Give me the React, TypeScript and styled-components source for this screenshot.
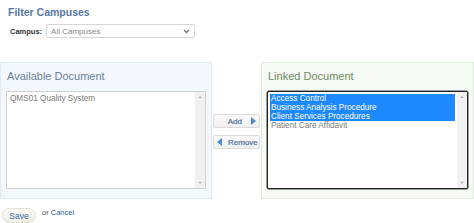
import styled, { createGlobalStyle } from "styled-components";

const GlobalStyle = createGlobalStyle`
  html, body { margin: 0; padding: 0; background: #fff; }
  body { font-family: "Liberation Sans", Arial, sans-serif; }
`;

const available = ["QMS01 Quality System"];
const linked = [
  { name: "Access Control", selected: true },
  { name: "Business Analysis Procedure", selected: true },
  { name: "Client Services Procedures", selected: true },
  { name: "Patient Care Affidavit", selected: false },
];

export default function App() {
  return (
    <Page>
      <GlobalStyle />
      <Filter>
        <FilterTitle>Filter Campuses</FilterTitle>
        <CampusRow>
          <CampusLabel>Campus:</CampusLabel>
          <Select>
            <span>All Campuses</span>
            <svg width="7" height="5" viewBox="0 0 7 5">
              <path d="M1 1 L3.5 3.5 L6 1" stroke="#777" strokeWidth="1.3" fill="none" />
            </svg>
          </Select>
        </CampusRow>
      </Filter>

      <Transfer>
        <Panel $tone="blue">
          <PanelTitle $tone="blue">Available Document</PanelTitle>
          <ListBox $focused={false}>
            <Items>
              {available.map(a => (
                <Item key={a} $selected={false}>{a}</Item>
              ))}
            </Items>
            <Scrollbar>
              <Arrow>▲</Arrow>
              <Arrow>▼</Arrow>
            </Scrollbar>
          </ListBox>
        </Panel>

        <Controls>
          <MoveButton $dir="right">
            <span>Add</span>
            <Tri $dir="right" />
          </MoveButton>
          <MoveButton $dir="left">
            <Tri $dir="left" />
            <span>Remove</span>
          </MoveButton>
        </Controls>

        <Panel $tone="green">
          <PanelTitle $tone="green">Linked Document</PanelTitle>
          <ListBox $focused>
            <Items>
              {linked.map(l => (
                <Item key={l.name} $selected={l.selected}>{l.name}</Item>
              ))}
            </Items>
            <Scrollbar>
              <Arrow>▲</Arrow>
              <Arrow>▼</Arrow>
            </Scrollbar>
          </ListBox>
        </Panel>
      </Transfer>

      <Footer>
        <SaveButton>Save</SaveButton>
        <OrText>
          or <CancelLink>Cancel</CancelLink>
        </OrText>
      </Footer>
    </Page>
  );
}

const Page = styled.div`
  width: 474px;
  height: 223px;
  overflow: hidden;
`;

const Filter = styled.div`
  padding: 5px 8px 0;
  height: 57px;
  box-sizing: border-box;
`;

const FilterTitle = styled.div`
  color: #5877a6;
  font-size: 10.5px;
  font-weight: bold;
  line-height: 14px;
`;

const CampusRow = styled.div`
  display: flex;
  align-items: center;
  gap: 4px;
  margin-top: 5px;
  padding-left: 2px;
`;

const CampusLabel = styled.span`
  color: #333;
  font-size: 7.5px;
  font-weight: bold;
`;

const Select = styled.div`
  width: 149px;
  height: 14px;
  box-sizing: border-box;
  border: 1px solid #d6d6d6;
  border-radius: 2px;
  display: flex;
  align-items: center;
  justify-content: space-between;
  padding: 0 4px;
  color: #888;
  font-size: 8px;
`;

const Transfer = styled.div`
  display: flex;
  margin-top: 5px;
  height: 137px;
`;

const Panel = styled.div<{ $tone: "blue" | "green" }>`
  width: ${({ $tone }) => ($tone === "blue" ? "212px" : "213px")};
  box-sizing: border-box;
  background: ${({ $tone }) => ($tone === "blue" ? "#f4f8fd" : "#f6faf4")};
  border: 1px solid ${({ $tone }) => ($tone === "blue" ? "#e1e9f3" : "#e2ebdf")};
  padding: 6px 5px 9px;
  display: flex;
  flex-direction: column;
`;

const PanelTitle = styled.div<{ $tone: "blue" | "green" }>`
  color: ${({ $tone }) => ($tone === "blue" ? "#6b7e9c" : "#6c8a62")};
  font-size: 11px;
  line-height: 14px;
  padding-left: 1px;
  margin-bottom: 8px;
`;

const ListBox = styled.div<{ $focused: boolean }>`
  flex: 1;
  display: flex;
  background: #fff;
  box-sizing: border-box;
  border: ${({ $focused }) => ($focused ? "1px solid #222" : "1px solid #d0d0d0")};
  border-radius: ${({ $focused }) => ($focused ? "2px" : "0")};
  box-shadow: ${({ $focused }) => ($focused ? "0 0 0 0.5px #444" : "none")};
  padding: 2px 0 2px 2px;
`;

const Items = styled.div`
  flex: 1;
  display: flex;
  flex-direction: column;
  padding-right: 2px;
`;

const Item = styled.div<{ $selected: boolean }>`
  font-size: 8.2px;
  line-height: 9px;
  padding-left: 1px;
  color: ${({ $selected }) => ($selected ? "#fff" : "#7a7a7a")};
  background: ${({ $selected }) => ($selected ? "#1e88ff" : "transparent")};
`;

const Scrollbar = styled.div`
  width: 10px;
  margin-top: -2px;
  margin-bottom: -2px;
  background: #f1f1f1;
  display: flex;
  flex-direction: column;
  justify-content: space-between;
  align-items: center;
  padding: 2px 0;
`;

const Arrow = styled.span`
  font-size: 4px;
  color: #a0a0a0;
  line-height: 6px;
`;

const Controls = styled.div`
  width: 49px;
  display: flex;
  flex-direction: column;
  align-items: center;
  gap: 7px;
  padding-top: 52px;
  box-sizing: border-box;
`;

const MoveButton = styled.div<{ $dir: "left" | "right" }>`
  width: 47px;
  height: 14px;
  box-sizing: border-box;
  border: 1px solid #dcdcdc;
  border-radius: 2px;
  background: linear-gradient(#fafafa, #efefef);
  display: flex;
  align-items: center;
  justify-content: ${({ $dir }) => ($dir === "right" ? "flex-end" : "flex-start")};
  gap: ${({ $dir }) => ($dir === "right" ? "9px" : "6px")};
  padding: 0 3px;
  color: #4f6f96;
  font-size: 8px;
  font-weight: normal;
  -webkit-text-stroke: 0.2px #4f6f96;
`;

const Tri = styled.span<{ $dir: "left" | "right" }>`
  width: 0;
  height: 0;
  border-top: 4px solid transparent;
  border-bottom: 4px solid transparent;
  ${({ $dir }) =>
    $dir === "right" ? "border-left: 5px solid #4a8ad0;" : "border-right: 5px solid #4a8ad0;"}
`;

const Footer = styled.div`
  display: flex;
  align-items: flex-start;
  gap: 6px;
  padding: 9px 0 0 2px;
`;

const SaveButton = styled.div`
  width: 34px;
  height: 15px;
  box-sizing: border-box;
  border: 1px solid #e0e0d0;
  border-radius: 8px;
  background: linear-gradient(#fdfdf8, #eeeee4);
  color: #3c64a0;
  font-size: 8.5px;
  display: flex;
  align-items: center;
  justify-content: center;
`;

const OrText = styled.span`
  color: #555;
  font-size: 7.5px;
  line-height: 10px;
`;

const CancelLink = styled.span`
  color: #2a5ea8;
`;
